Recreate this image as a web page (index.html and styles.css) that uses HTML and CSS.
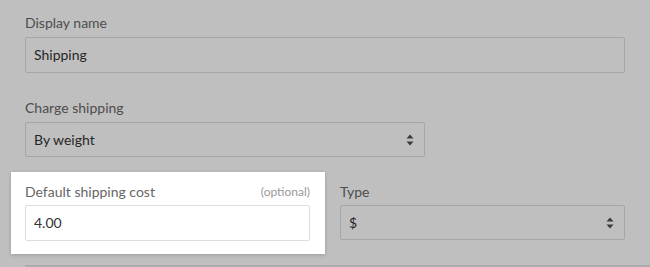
FILE: index.html
```html
<!DOCTYPE html>
<html>
<head>
<meta charset="utf-8">
<link rel="stylesheet" href="styles.css">
</head>
<body>
<div class="page">
  <div class="field">
    <div class="label">Display name</div>
    <div class="input">Shipping</div>
  </div>
  <div class="field narrow">
    <div class="label">Charge shipping</div>
    <div class="input select">By weight
      <svg class="arrows" width="8" height="14" viewBox="0 0 8 14"><path d="M0.5 5.5 L4 1.5 L7.5 5.5 Z M0.5 8.5 L4 12.5 L7.5 8.5 Z" fill="currentColor"/></svg>
    </div>
  </div>
  <div class="row">
    <div class="card">
      <div class="label split"><span>Default shipping cost</span><span class="opt">(optional)</span></div>
      <div class="input light">4.00</div>
    </div>
    <div class="field type">
      <div class="label">Type</div>
      <div class="input select">$
        <svg class="arrows" width="8" height="14" viewBox="0 0 8 14"><path d="M0.5 5.5 L4 1.5 L7.5 5.5 Z M0.5 8.5 L4 12.5 L7.5 8.5 Z" fill="currentColor"/></svg>
      </div>
    </div>
  </div>
  <div class="divider"></div>
</div>
</body>
</html>
```
FILE: styles.css
```css
html, body {
  margin: 0;
  background: #bfbfbf;
  font-family: "Lato", "Noto Sans", sans-serif;
  font-size: 14px;
}
.page {
  padding: 13px 25px 0 25px;
  width: 600px;
}
.field { margin-bottom: 25px; }
.field.narrow { width: 400px; margin-bottom: 15px; }
.label {
  color: #4d4d4d;
  line-height: 20px;
  margin-bottom: 4px;
}
.input {
  position: relative;
  box-sizing: border-box;
  height: 36px;
  border: 1px solid #a6a6a6;
  border-radius: 2px;
  padding: 0 8px;
  line-height: 34px;
  color: #262626;
}
.select { height: 35px; line-height: 33px; }
.arrows {
  position: absolute;
  right: 10px;
  top: 10px;
  color: #3a3a3a;
}
.row {
  display: flex;
  align-items: flex-start;
}
.card {
  background: #fff;
  margin-left: -14px;
  padding: 10px 15px 13px 14px;
  width: 285px;
  box-shadow: 0 1px 4px rgba(0,0,0,0.18);
}
.card .label { color: #666; margin-bottom: 3px; }
.split { display: flex; justify-content: space-between; }
.opt { color: #999; font-size: 12px; }
.input.light { border-color: #ddd; color: #333; }
.field.type {
  margin: 10px 0 0 15px;
  width: 285px;
}
.field.type .label { margin-bottom: 3px; }
.divider {
  margin-top: 11px;
  margin-right: -25px;
  border-top: 2px solid #acacac;
}
```
